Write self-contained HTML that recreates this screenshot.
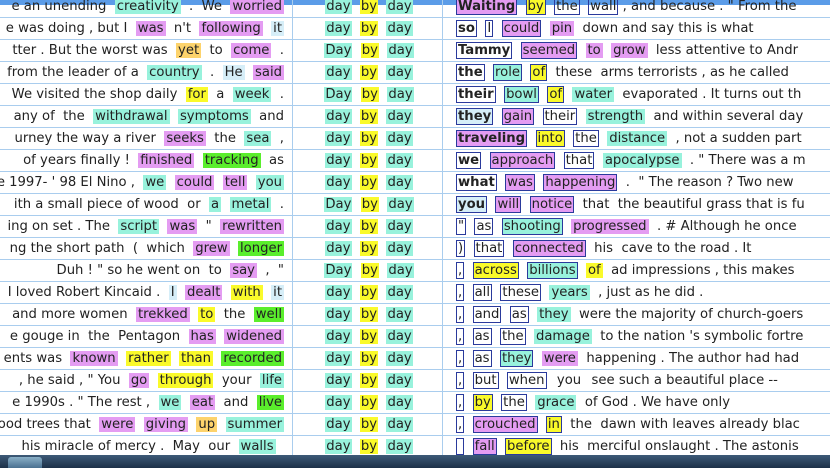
<!DOCTYPE html>
<html><head><meta charset="utf-8"><style>
*{margin:0;padding:0;box-sizing:border-box}
body{width:830px;height:468px;overflow:hidden;background:#fff;font-family:"DejaVu Sans","Liberation Sans",sans-serif;font-size:13.2px;color:#222;position:relative}
.top{position:absolute;left:0;top:0;width:830px;height:5px;background:#5b9ce8}
.row{position:absolute;left:0;width:830px;height:22px;border-bottom:1px solid #a9cdee}
.c{position:absolute;top:0;height:21px;display:flex;align-items:center;overflow:hidden}
.c>div{white-space:pre;flex:none}
.l{left:0;width:290px;justify-content:flex-end;padding-right:6px}
.m{left:294px;width:148px;justify-content:center;padding-left:2px}
.m span{padding:0 1px}
.r{left:444px;width:386px;justify-content:flex-start;padding-left:12px}
.vl{position:absolute;top:0;height:455px;width:1px;background:#a9cdee}
span{padding:0 2px}
.p{background:#e49cf2}.y{background:#fafa2a}.cy{background:#98f2dc}.o{background:#fdd36c}.g{background:#5aee2c}.lb{background:#d6eef8}
.b{border:1.5px solid #2a3a9c;padding:0 1px}
.bd{font-weight:bold}
.task{position:absolute;left:0;top:455px;width:830px;height:13px;background:linear-gradient(#3d5a78,#1c3048)}
.start{position:absolute;left:8px;top:457px;width:34px;height:11px;background:linear-gradient(#8ab0c8,#4a7090);border-radius:3px 3px 0 0}
</style></head><body>
<div class="top"></div>
<div class="vl" style="left:292px"></div><div class="vl" style="left:442px"></div>

<div class="row" style="top:-4px"><div class="c l"><div>e an unending  <span class="cy">creativity</span>  .  We  <span class="p">worried</span></div></div><div class="c m"><div><span class="cy">day</span>  <span class="y">by</span>  <span class="cy">day</span></div></div><div class="c r"><div><span class="b bd p">Waiting</span>  <span class="b y">by</span>  <span class="b">the</span>  <span class="b">wall</span> , and because . " From the</div></div></div>
<div class="row" style="top:18px"><div class="c l"><div>e was doing , but I  <span class="p">was</span>  n't  <span class="p">following</span>  <span class="lb">it</span></div></div><div class="c m"><div><span class="cy">day</span>  <span class="y">by</span>  <span class="cy">day</span></div></div><div class="c r"><div><span class="b bd">so</span>  <span class="b">I</span>  <span class="b p">could</span>  <span class="p">pin</span>  down and say this is what</div></div></div>
<div class="row" style="top:40px"><div class="c l"><div>tter . But the worst was  <span class="o">yet</span>  to  <span class="p">come</span>  .</div></div><div class="c m"><div><span class="cy">Day</span>  <span class="y">by</span>  <span class="cy">day</span></div></div><div class="c r"><div><span class="b bd">Tammy</span>  <span class="b p">seemed</span>  <span class="p">to</span>  <span class="p">grow</span>  less attentive to Andr</div></div></div>
<div class="row" style="top:62px"><div class="c l"><div>from the leader of a  <span class="cy">country</span>  .  <span class="lb">He</span>  <span class="p">said</span></div></div><div class="c m"><div><span class="cy">day</span>  <span class="y">by</span>  <span class="cy">day</span></div></div><div class="c r"><div><span class="b bd">the</span>  <span class="b cy">role</span>  <span class="b y">of</span>  these  arms terrorists , as he called</div></div></div>
<div class="row" style="top:84px"><div class="c l"><div>We visited the shop daily  <span class="y">for</span>  a  <span class="cy">week</span>  .</div></div><div class="c m"><div><span class="cy">Day</span>  <span class="y">by</span>  <span class="cy">day</span></div></div><div class="c r"><div><span class="b bd">their</span>  <span class="b cy">bowl</span>  <span class="b y">of</span>  <span class="cy">water</span>  evaporated . It turns out th</div></div></div>
<div class="row" style="top:106px"><div class="c l"><div>any of  the  <span class="cy">withdrawal</span>  <span class="cy">symptoms</span>  and</div></div><div class="c m"><div><span class="cy">day</span>  <span class="y">by</span>  <span class="cy">day</span></div></div><div class="c r"><div><span class="b bd lb">they</span>  <span class="b p">gain</span>  <span class="b">their</span>  <span class="cy">strength</span>  and within several day</div></div></div>
<div class="row" style="top:128px"><div class="c l"><div>urney the way a river  <span class="p">seeks</span>  the  <span class="cy">sea</span>  ,</div></div><div class="c m"><div><span class="cy">day</span>  <span class="y">by</span>  <span class="cy">day</span></div></div><div class="c r"><div><span class="b bd p">traveling</span>  <span class="b y">into</span>  <span class="b">the</span>  <span class="cy">distance</span>  , not a sudden part</div></div></div>
<div class="row" style="top:150px"><div class="c l"><div>of years finally !  <span class="p">finished</span>  <span class="g">tracking</span>  as</div></div><div class="c m"><div><span class="cy">day</span>  <span class="y">by</span>  <span class="cy">day</span></div></div><div class="c r"><div><span class="b bd">we</span>  <span class="b p">approach</span>  <span class="b">that</span>  <span class="cy">apocalypse</span>  . " There was a m</div></div></div>
<div class="row" style="top:172px"><div class="c l"><div>e 1997- ' 98 El Nino ,  <span class="cy">we</span>  <span class="p">could</span>  <span class="p">tell</span>  <span class="cy">you</span></div></div><div class="c m"><div><span class="cy">day</span>  <span class="y">by</span>  <span class="cy">day</span></div></div><div class="c r"><div><span class="b bd">what</span>  <span class="b p">was</span>  <span class="b p">happening</span>  .  " The reason ? Two new</div></div></div>
<div class="row" style="top:194px"><div class="c l"><div>ith a small piece of wood  or  <span class="cy">a</span>  <span class="cy">metal</span>  .</div></div><div class="c m"><div><span class="cy">Day</span>  <span class="y">by</span>  <span class="cy">day</span></div></div><div class="c r"><div><span class="b bd lb">you</span>  <span class="b p">will</span>  <span class="b p">notice</span>  that  the beautiful grass that is fu</div></div></div>
<div class="row" style="top:216px"><div class="c l"><div>ing on set . The  <span class="cy">script</span>  <span class="p">was</span>  "  <span class="p">rewritten</span></div></div><div class="c m"><div><span class="cy">day</span>  <span class="y">by</span>  <span class="cy">day</span></div></div><div class="c r"><div><span class="b">"</span>  <span class="b">as</span>  <span class="b cy">shooting</span>  <span class="p">progressed</span>  . # Although he once</div></div></div>
<div class="row" style="top:238px"><div class="c l"><div>ng the short path  (  which  <span class="p">grew</span>  <span class="g">longer</span></div></div><div class="c m"><div><span class="cy">day</span>  <span class="y">by</span>  <span class="cy">day</span></div></div><div class="c r"><div><span class="b">)</span>  <span class="b">that</span>  <span class="b p">connected</span>  his  cave to the road . It</div></div></div>
<div class="row" style="top:260px"><div class="c l"><div>Duh ! " so he went on  to  <span class="p">say</span>  ,  "</div></div><div class="c m"><div><span class="cy">Day</span>  <span class="y">by</span>  <span class="cy">day</span></div></div><div class="c r"><div><span class="b">,</span>  <span class="b y">across</span>  <span class="b cy">billions</span>  <span class="y">of</span>  ad impressions , this makes</div></div></div>
<div class="row" style="top:282px"><div class="c l"><div>I loved Robert Kincaid .  <span class="lb">I</span>  <span class="p">dealt</span>  <span class="y">with</span>  <span class="lb">it</span></div></div><div class="c m"><div><span class="cy">day</span>  <span class="y">by</span>  <span class="cy">day</span></div></div><div class="c r"><div><span class="b">,</span>  <span class="b">all</span>  <span class="b">these</span>  <span class="cy">years</span>  , just as he did .</div></div></div>
<div class="row" style="top:304px"><div class="c l"><div>and more women  <span class="p">trekked</span>  <span class="y">to</span>  the  <span class="g">well</span></div></div><div class="c m"><div><span class="cy">day</span>  <span class="y">by</span>  <span class="cy">day</span></div></div><div class="c r"><div><span class="b">,</span>  <span class="b">and</span>  <span class="b">as</span>  <span class="cy">they</span>  were the majority of church-goers</div></div></div>
<div class="row" style="top:326px"><div class="c l"><div>e gouge in  the  Pentagon  <span class="p">has</span>  <span class="p">widened</span></div></div><div class="c m"><div><span class="cy">day</span>  <span class="y">by</span>  <span class="cy">day</span></div></div><div class="c r"><div><span class="b">,</span>  <span class="b">as</span>  <span class="b">the</span>  <span class="cy">damage</span>  to the nation 's symbolic fortre</div></div></div>
<div class="row" style="top:348px"><div class="c l"><div>ents was  <span class="p">known</span>  <span class="y">rather</span>  <span class="y">than</span>  <span class="g">recorded</span></div></div><div class="c m"><div><span class="cy">day</span>  <span class="y">by</span>  <span class="cy">day</span></div></div><div class="c r"><div><span class="b">,</span>  <span class="b">as</span>  <span class="b cy">they</span>  <span class="p">were</span>  happening . The author had had</div></div></div>
<div class="row" style="top:370px"><div class="c l"><div>, he said , " You  <span class="p">go</span>  <span class="y">through</span>  your  <span class="cy">life</span></div></div><div class="c m"><div><span class="cy">day</span>  <span class="y">by</span>  <span class="cy">day</span></div></div><div class="c r"><div><span class="b">,</span>  <span class="b">but</span>  <span class="b">when</span>  <span>you</span>  see such a beautiful place --</div></div></div>
<div class="row" style="top:392px"><div class="c l"><div>e 1990s . " The rest ,  <span class="cy">we</span>  <span class="p">eat</span>  and  <span class="g">live</span></div></div><div class="c m"><div><span class="cy">day</span>  <span class="y">by</span>  <span class="cy">day</span></div></div><div class="c r"><div><span class="b">,</span>  <span class="b y">by</span>  <span class="b">the</span>  <span class="cy">grace</span>  of God . We have only</div></div></div>
<div class="row" style="top:414px"><div class="c l"><div>ood trees that  <span class="p">were</span>  <span class="p">giving</span>  <span class="o">up</span>  <span class="cy">summer</span></div></div><div class="c m"><div><span class="cy">day</span>  <span class="y">by</span>  <span class="cy">day</span></div></div><div class="c r"><div><span class="b">,</span>  <span class="b p">crouched</span>  <span class="b y">in</span>  the  dawn with leaves already blac</div></div></div>
<div class="row" style="top:436px"><div class="c l"><div>his miracle of mercy .  May  our  <span class="cy">walls</span>  </div></div><div class="c m"><div><span class="cy">day</span>  <span class="y">by</span>  <span class="cy">day</span></div></div><div class="c r"><div><span class="b"> </span>  <span class="b p">fall</span>  <span class="b y">before</span>  his  merciful onslaught . The astonis</div></div></div>

<div class="task"></div><div class="start"></div>
</body></html>
